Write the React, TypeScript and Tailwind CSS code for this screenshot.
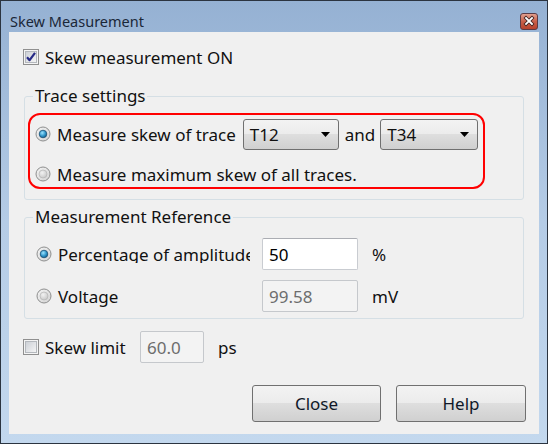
import React from "react";

const FONT = "font-['Noto_Sans','DejaVu_Sans',sans-serif]";

// Win7 style radio button
const Radio: React.FC<{ checked?: boolean }> = ({ checked }) => (
  <svg width="16" height="16" viewBox="0 0 16 16" className="shrink-0">
    <defs>
      <linearGradient id="rOuter" x1="0" y1="0" x2="1" y2="1">
        <stop offset="0" stopColor="#f4f4f4" />
        <stop offset="1" stopColor="#d2d2d2" />
      </linearGradient>
      <radialGradient id="rOn" cx="0.4" cy="0.35" r="0.7">
        <stop offset="0" stopColor="#9be3ff" />
        <stop offset="0.6" stopColor="#2d93c8" />
        <stop offset="1" stopColor="#135a86" />
      </radialGradient>
      <radialGradient id="rOff" cx="0.4" cy="0.35" r="0.7">
        <stop offset="0" stopColor="#f2f2f2" />
        <stop offset="1" stopColor="#c6c6c6" />
      </radialGradient>
    </defs>
    <circle cx="8" cy="8" r="7" fill="url(#rOuter)" stroke="#8e8f8f" strokeWidth="1" />
    {checked ? (
      <circle cx="8" cy="8" r="3.8" fill="url(#rOn)" stroke="#1b4f74" strokeWidth="0.8" />
    ) : (
      <circle cx="8" cy="8" r="4" fill="url(#rOff)" stroke="#b0b0b0" strokeWidth="0.6" />
    )}
  </svg>
);

// Win7 style checkbox
const Check: React.FC<{ checked?: boolean }> = ({ checked }) => (
  <svg width="16" height="16" viewBox="0 0 16 16" className="shrink-0">
    <defs>
      <linearGradient id="cIn" x1="0" y1="0" x2="1" y2="1">
        <stop offset="0" stopColor="#cbcfd5" />
        <stop offset="1" stopColor="#f6f6f6" />
      </linearGradient>
    </defs>
    <rect x="0.5" y="0.5" width="15" height="15" fill="#f4f4f4" stroke="#8f8f8f" />
    <rect x="2.5" y="2.5" width="11" height="11" fill="url(#cIn)" stroke="#b4b8bd" />
    {checked && (
      <path d="M4 8.2 L6.6 11.2 L12 3.8" fill="none" stroke="#262a86" strokeWidth="2.2" strokeLinejoin="round" />
    )}
  </svg>
);

const Combo: React.FC<{ value: string; w: string }> = ({ value, w }) => (
  <div
    className={`${w} h-[31px] flex items-center justify-between pl-[6px] pr-[8px] border border-[#707070] rounded-[3px] bg-[linear-gradient(#f3f3f3_0%,#ebebeb_50%,#dedede_50%,#d0d0d0_100%)]`}
  >
    <span>{value}</span>
    <svg width="9" height="5" viewBox="0 0 9 5">
      <path d="M0 0 H9 L4.5 5 Z" fill="#000" />
    </svg>
  </div>
);

const Field: React.FC<{ value: string; w: string; disabled?: boolean }> = ({ value, w, disabled }) => (
  <div
    className={`${w} h-[32px] flex items-center px-[6px] border rounded-[2px] ${
      disabled
        ? "bg-[#f3f3f3] border-[#c5c8cc] text-[#6d6d6d]"
        : "bg-white border-[#c9ccd1] border-t-[#abadb3] text-black"
    }`}
  >
    {value}
  </div>
);

const Button: React.FC<{ label: string; w: string }> = ({ label, w }) => (
  <button
    type="button"
    className={`${w} h-[37px] border border-[#707070] rounded-[3px] text-[#101828] bg-[linear-gradient(#f3f3f3_0%,#ebebeb_50%,#dedede_50%,#d0d0d0_100%)]`}
  >
    {label}
  </button>
);

const App: React.FC = () => {
  return (
    <div className={`w-[548px] h-[444px] ${FONT} text-[17px] text-[#111] leading-none`}>
      {/* Window frame */}
      <div className="w-full h-full flex flex-col border border-[#2b3440] bg-linear-to-b from-[#95b1d3] via-[#b5cce6] to-[#c3d8ee] px-[8px] pb-[9px]">
        {/* Title bar */}
        <div className="h-[31px] shrink-0 flex items-center justify-between pl-[1px] pr-[1px]">
          <span className="text-[14.5px] text-[#1a2738] pt-[9px]">Skew Measurement</span>
          <svg width="18" height="17" viewBox="0 0 18 17" className="mt-[10px]">
            <defs>
              <linearGradient id="xBg" x1="0" y1="0" x2="0" y2="1">
                <stop offset="0" stopColor="#e4a493" />
                <stop offset="0.5" stopColor="#c8604a" />
                <stop offset="1" stopColor="#b8402a" />
              </linearGradient>
            </defs>
            <rect x="0.5" y="0.5" width="17" height="16" rx="2.5" fill="url(#xBg)" stroke="#5b3b45" />
            <path d="M6 5 L12 11 M12 5 L6 11" stroke="#3a2020" strokeWidth="3.4" strokeLinecap="square" />
            <path d="M6 5 L12 11 M12 5 L6 11" stroke="#fff" strokeWidth="1.8" strokeLinecap="square" />
          </svg>
        </div>

        {/* Content */}
        <div className="flex-1 bg-[#f0f0f0] flex flex-col">
          {/* Skew measurement ON */}
          <div className="h-[20px] mt-[15px] pl-[14px] flex items-center gap-[6px]">
            <Check checked />
            <span>Skew measurement ON</span>
          </div>

          {/* Trace settings */}
          <fieldset className="mt-[19px] mx-[15px] border border-[#d5dfe5] rounded-[3px] pb-[10px]">
            <legend className="ml-[8px] px-[2px] leading-[20px]">Trace settings</legend>
            <div className="mt-[7px] ml-[3px] w-[457px] border-2 border-[#ff0000] rounded-[12px] pl-[5px] flex flex-col">
              <div className="h-[38px] flex items-center">
                <Radio checked />
                <span className="ml-[6px]">Measure skew of trace</span>
                <div className="ml-[7px]">
                  <Combo value="T12" w="w-[96px]" />
                </div>
                <span className="ml-[6px]">and</span>
                <div className="ml-[5px]">
                  <Combo value="T34" w="w-[98px]" />
                </div>
              </div>
              <div className="h-[26px] mt-[8px] flex items-center">
                <Radio />
                <span className="ml-[6px]">Measure maximum skew of all traces.</span>
              </div>
            </div>
          </fieldset>

          {/* Measurement Reference */}
          <fieldset className="mt-[7px] mx-[15px] border border-[#d5dfe5] rounded-[3px] pb-[5px]">
            <legend className="ml-[8px] px-[2px] leading-[20px]">Measurement Reference</legend>
            <div className="mt-[10px] pl-[11px] flex flex-col gap-[8px]">
              <div className="h-[34px] flex items-center">
                <Radio checked />
                <span className="ml-[6px] w-[192px] overflow-hidden whitespace-nowrap">Percentage of amplitude</span>
                <div className="ml-[12px]">
                  <Field value="50" w="w-[96px]" />
                </div>
                <span className="ml-[14px]">%</span>
              </div>
              <div className="h-[34px] flex items-center">
                <Radio />
                <span className="ml-[6px] w-[192px]">Voltage</span>
                <div className="ml-[12px]">
                  <Field value="99.58" w="w-[96px]" disabled />
                </div>
                <span className="ml-[14px]">mV</span>
              </div>
            </div>
          </fieldset>

          {/* Skew limit */}
          <div className="h-[32px] mt-[12px] pl-[14px] flex items-center">
            <Check />
            <span className="ml-[6px] w-[95px]">Skew limit</span>
            <Field value="60.0" w="w-[64px]" disabled />
            <span className="ml-[14px]">ps</span>
          </div>

          {/* Buttons */}
          <div className="mt-[22px] pr-[13px] flex justify-end gap-[15px]">
            <Button label="Close" w="w-[129px]" />
            <Button label="Help" w="w-[130px]" />
          </div>
        </div>
      </div>
    </div>
  );
};

export default App;
